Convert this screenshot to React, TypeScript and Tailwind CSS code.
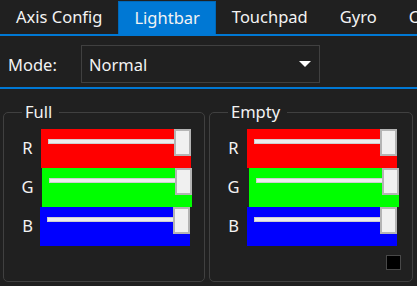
import React from "react";

const font = { fontFamily: '"Noto Sans", "Open Sans", sans-serif' };

function Slider({ color, shift }: { color: string; shift: string }) {
  return (
    <div className={`relative h-[39px] w-[150px] ${color} ${shift}`}>
      <div className="absolute left-[7px] top-[10px] h-[5px] w-[128px] border border-[#cfcfcf] bg-[#ededed]" />
      <div className="absolute left-[133px] top-0 h-[27px] w-[17px] border-2 border-[#b4b4b4] bg-[#f0f0f0]" />
    </div>
  );
}

function Row({ label, color, shift }: { label: string; color: string; shift: string }) {
  return (
    <div className="flex items-center">
      <div className="w-[27px] text-center text-[16.5px] leading-none text-[#f3f3f3]">{label}</div>
      <Slider color={color} shift={shift} />
    </div>
  );
}

function Group({
  title,
  width,
  shifts,
  swatch,
}: {
  title: string;
  width: string;
  shifts: [string, string, string];
  swatch?: boolean;
}) {
  return (
    <fieldset className={`${width} h-[180px] rounded-[5px] border border-[#404040] pl-[10px]`}>
      <legend className="ml-[8px] pl-[3px] pr-[7px] text-[16.5px] leading-[20px] text-[#f3f3f3]">
        {title}
      </legend>
      <div className="mt-[7px] flex flex-col">
        <Row label="R" color="bg-[#ff0000]" shift={shifts[0]} />
        <Row label="G" color="bg-[#00ff00]" shift={shifts[1]} />
        <Row label="B" color="bg-[#0000ff]" shift={shifts[2]} />
      </div>
      {swatch && (
        <div className="mt-[9px] flex justify-end pr-[11px]">
          <div className="h-[15px] w-[15px] border border-[#484848] bg-black" />
        </div>
      )}
    </fieldset>
  );
}

export default function App() {
  const tabs = ["Axis Config", "Lightbar", "Touchpad", "Gyro", "Color"];
  return (
    <div className="h-[286px] w-[417px] overflow-hidden bg-[#202020] text-[#f3f3f3]" style={font}>
      <div className="flex h-[34px] pt-[1px] whitespace-nowrap">
        {tabs.map((t) => (
          <div
            key={t}
            className={
              t === "Lightbar"
                ? "flex h-[33px] items-center border-x border-t border-[#0068b8] bg-[#0078d4] px-[15px] text-[16.5px]"
                : "flex h-[33px] items-center px-[16px] text-[16.5px]"
            }
          >
            {t}
          </div>
        ))}
      </div>
      <div className="h-[2px] bg-[#0078d4]" />
      <div className="flex h-[51px] items-start pt-[9px] pl-[8px]">
        <div className="flex h-[38px] w-[73px] items-center pt-[2px] text-[16.5px]">Mode:</div>
        <div className="flex h-[38px] w-[239px] items-center justify-between border border-[#404040] pl-[7px] pr-[8px] text-[16.5px]">
          <span className="pt-[2px]">Normal</span>
          <svg width="12" height="6" viewBox="0 0 12 6">
            <polygon points="0,0 12,0 6,6" fill="#ffffff" />
          </svg>
        </div>
      </div>
      <div className="h-[2px] bg-[#0078d4]" />
      <div className="flex gap-[4px] pl-[3px] pt-[13px]">
        <Group title="Full" width="w-[202px]" shifts={["ml-0", "ml-[1px]", "-ml-[1px]"]} />
        <Group title="Empty" width="w-[204px]" shifts={["ml-0", "ml-[2px]", "ml-0"]} swatch />
      </div>
    </div>
  );
}
